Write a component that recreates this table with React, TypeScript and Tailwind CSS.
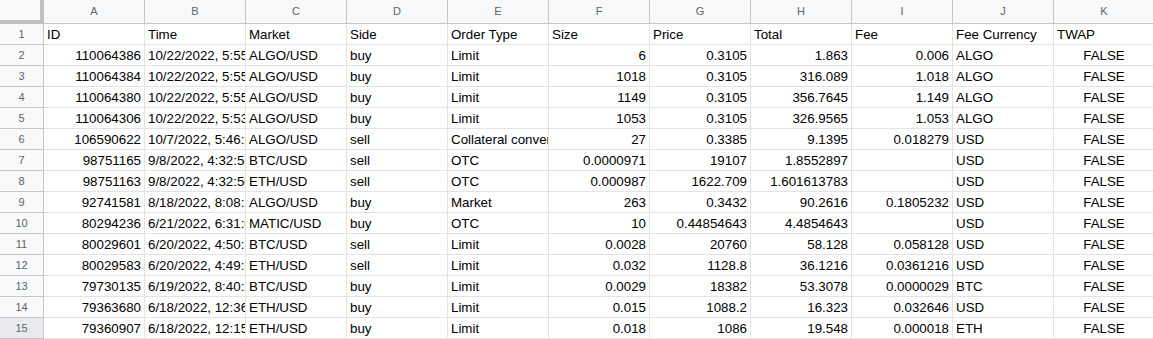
import React from 'react';

type Align = 'l' | 'r' | 'c';

const COLS = ['A', 'B', 'C', 'D', 'E', 'F', 'G', 'H', 'I', 'J', 'K'];

// alignment for each column (row 1 is headers, always left)
const ALIGN: Align[] = ['r', 'l', 'l', 'l', 'l', 'r', 'r', 'r', 'r', 'l', 'c'];

const HEADER = ['ID', 'Time', 'Market', 'Side', 'Order Type', 'Size', 'Price', 'Total', 'Fee', 'Fee Currency', 'TWAP'];

const ROWS: string[][] = [
  ['110064386', '10/22/2022, 5:55:41 PM', 'ALGO/USD', 'buy', 'Limit', '6', '0.3105', '1.863', '0.006', 'ALGO', 'FALSE'],
  ['110064384', '10/22/2022, 5:55:41 PM', 'ALGO/USD', 'buy', 'Limit', '1018', '0.3105', '316.089', '1.018', 'ALGO', 'FALSE'],
  ['110064380', '10/22/2022, 5:55:40 PM', 'ALGO/USD', 'buy', 'Limit', '1149', '0.3105', '356.7645', '1.149', 'ALGO', 'FALSE'],
  ['110064306', '10/22/2022, 5:53:12 PM', 'ALGO/USD', 'buy', 'Limit', '1053', '0.3105', '326.9565', '1.053', 'ALGO', 'FALSE'],
  ['106590622', '10/7/2022, 5:46:20 AM', 'ALGO/USD', 'sell', 'Collateral conversion', '27', '0.3385', '9.1395', '0.018279', 'USD', 'FALSE'],
  ['98751165', '9/8/2022, 4:32:51 PM', 'BTC/USD', 'sell', 'OTC', '0.0000971', '19107', '1.8552897', '', 'USD', 'FALSE'],
  ['98751163', '9/8/2022, 4:32:50 PM', 'ETH/USD', 'sell', 'OTC', '0.000987', '1622.709', '1.601613783', '', 'USD', 'FALSE'],
  ['92741581', '8/18/2022, 8:08:15 PM', 'ALGO/USD', 'buy', 'Market', '263', '0.3432', '90.2616', '0.1805232', 'USD', 'FALSE'],
  ['80294236', '6/21/2022, 6:31:02 PM', 'MATIC/USD', 'buy', 'OTC', '10', '0.44854643', '4.4854643', '', 'USD', 'FALSE'],
  ['80029601', '6/20/2022, 4:50:33 PM', 'BTC/USD', 'sell', 'Limit', '0.0028', '20760', '58.128', '0.058128', 'USD', 'FALSE'],
  ['80029583', '6/20/2022, 4:49:58 PM', 'ETH/USD', 'sell', 'Limit', '0.032', '1128.8', '36.1216', '0.0361216', 'USD', 'FALSE'],
  ['79730135', '6/19/2022, 8:40:27 PM', 'BTC/USD', 'buy', 'Limit', '0.0029', '18382', '53.3078', '0.0000029', 'BTC', 'FALSE'],
  ['79363680', '6/18/2022, 12:36:44 PM', 'ETH/USD', 'buy', 'Limit', '0.015', '1088.2', '16.323', '0.032646', 'USD', 'FALSE'],
  ['79360907', '6/18/2022, 12:15:09 PM', 'ETH/USD', 'buy', 'Limit', '0.018', '1086', '19.548', '0.000018', 'ETH', 'FALSE'],
];

function Cell({ value, align }: { value: string; align: Align }) {
  const justify =
    align === 'r' ? 'justify-end' : align === 'c' ? 'justify-center' : 'justify-start';
  return (
    <div
      className={`flex ${justify} items-end w-[101px] shrink-0 h-[21px] border-r border-b border-[#e2e3e3] px-[3px] pb-[2px] overflow-hidden whitespace-nowrap text-[13.33px] leading-[15px] text-[#000]`}
    >
      <span className={align === 'l' ? '' : 'shrink-0'}>{value}</span>
    </div>
  );
}

function RowHeader({ n, active }: { n: number; active?: boolean }) {
  return (
    <div
      className={`flex items-center justify-center w-[44px] shrink-0 h-[21px] border-r border-b border-[#c4c7c5] text-[11px] text-[#5f6368] ${
        active ? 'bg-[#e8eaed]' : 'bg-[#f8f9fa]'
      }`}
    >
      {n}
    </div>
  );
}

export default function App() {
  const body = [HEADER, ...ROWS];

  return (
    <div className="w-[1153px] h-[339px] overflow-hidden bg-white font-['Arial','Liberation_Sans',sans-serif]">
      {/* column letters */}
      <div className="flex h-[24px]">
        <div className="w-[44px] shrink-0 h-[24px] bg-[#f8f9fa] border-r-4 border-b-4 border-[#c0c0c0]" />
        {COLS.map((c) => (
          <div
            key={c}
            className="flex items-center justify-center w-[101px] shrink-0 h-[24px] bg-[#f8f9fa] border-r border-b border-[#c4c7c5] text-[11px] text-[#5f6368]"
          >
            {c}
          </div>
        ))}
      </div>

      {body.map((row, i) => (
        <div key={i} className="flex">
          <RowHeader n={i + 1} active={i === 14} />
          {row.map((v, j) => (
            <Cell key={j} value={v} align={i === 0 ? 'l' : ALIGN[j]} />
          ))}
        </div>
      ))}
    </div>
  );
}
